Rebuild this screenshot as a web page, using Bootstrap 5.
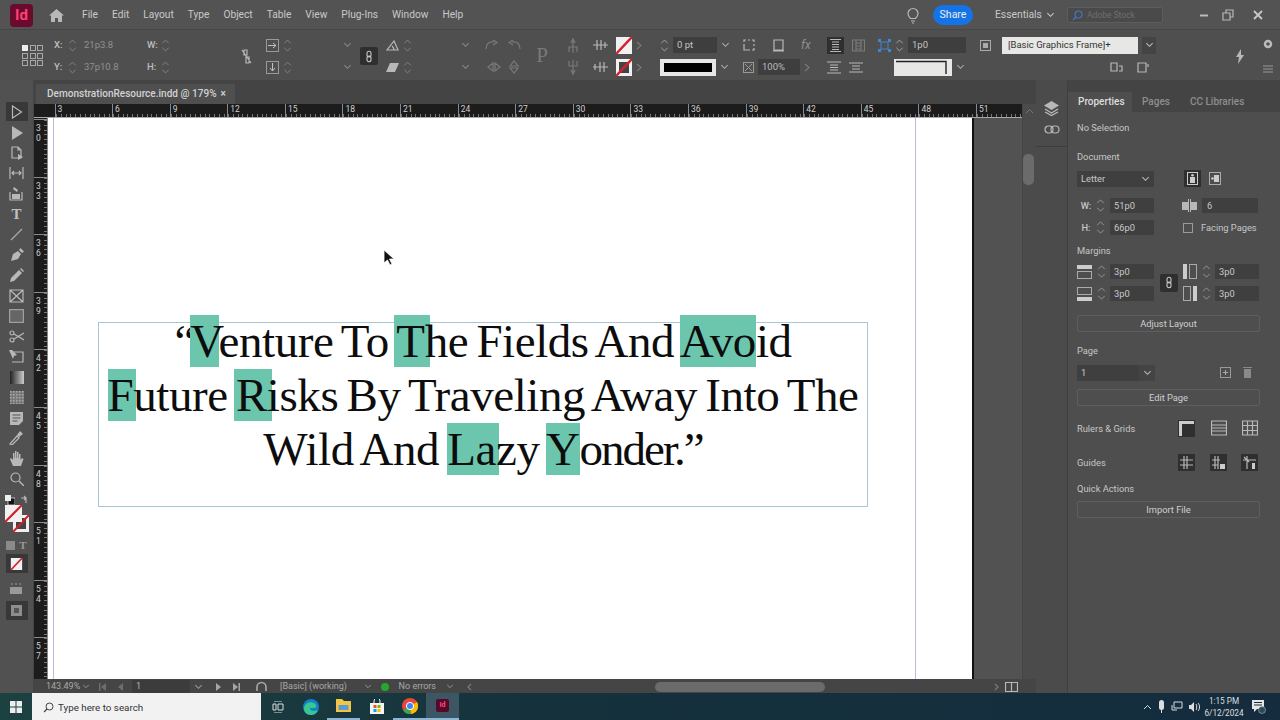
<!DOCTYPE html>
<html lang="en">
<head>
<meta charset="UTF-8">
<meta name="viewport" content="width=device-width, initial-scale=1.0">
<title>DemonstrationResource.indd - InDesign</title>
<link href="https://cdn.jsdelivr.net/npm/bootstrap@5.3.3/dist/css/bootstrap.min.css" rel="stylesheet">
<style>
html, body { margin: 0; background: #4f4f4f; }
body { font-family: Roboto, "Liberation Sans", sans-serif; font-size: 10px; color: #c8c8c8; line-height: 1.2; }
.app { width: 1280px; height: 720px; overflow: hidden; }
svg { display: block; flex: none; }
.ic { fill: none; stroke: #b8b8b8; stroke-width: 1.2; }
.ic-dim { fill: none; stroke: #7a7a7a; stroke-width: 1.2; }
.solid { fill: #b8b8b8; stroke: none; }
.serif-t { font-family: "Liberation Serif", serif; font-weight: 700; }

/* top menu */
.topbar { height: 30px; background: #535353; border-bottom: 1px solid #474747; padding: 1px 0 0 10px; }
.logo { width: 23px; height: 23px; border-radius: 4px; background: #6a0a2c; color: #ff4077; font-weight: 700; font-size: 15px; }
.home-ic { margin: 0 18px 0 16px; }
.menu { gap: 14px; font-size: 10.2px; color: #c9c9c9; }
.share { width: 40px; height: 20px; margin: 0 22px 0 14px; border-radius: 10px; background: #1473e6; color: #eee; font-size: 10.5px; }
.essentials { width: 50px; font-size: 10.3px; white-space: nowrap; }
.stock { width: 96px; height: 16px; margin-left: 22px; border: 1px solid #5d5d5d; border-radius: 2px; background: #4a4a4a; padding-left: 4px; color: #6f6f6f; font-size: 8.5px; }
.winbtns { margin: 0 17px 0 36px; gap: 13px; }
.win-x { margin-left: 6px; }

/* control panel */
.ctl { height: 50px; padding-top: 2px; background: #4f4f4f; display: grid; grid-auto-flow: column; grid-template-rows: 22px 22px; align-content: center;
  grid-template-columns: 22px 28px 93px 87px 32px 98px 26px 92px 50px 28px 56px 42px 80px 84px 50px 100px 30px 158px 1fr; }
.two { grid-row: 1 / 3; }
.cell { display: flex; align-items: center; gap: 4px; }
.lbl { color: #bdbdbd; font-weight: 500; font-size: 9.5px; width: 10px; }
.val { color: #8f8f8f; font-size: 9.5px; margin-left: 3px; }
.chain { width: 18px; height: 18px; background: #2f2f2f; border-radius: 2px; }
.chev-r { margin-left: auto; }
.big-p { font-family: "Liberation Serif", serif; font-size: 21px; color: #7a7a7a; }
.field { background: #3e3e3e; height: 16px; color: #c4c4c4; font-size: 9.5px; display: flex; align-items: center; padding-left: 4px; }
.f-stroke { width: 44px; }
.f-pct { width: 42px; color: #bbb; }
.f-sp { width: 58px; }
.light-field { background: #e7e7e5; color: #333; font-size: 9.5px; height: 17px; display: flex; align-items: center; padding-left: 6px; }
.lf-stroke { width: 56px; padding-left: 4px; }
.lf-style { width: 58px; margin-left: 26px; padding: 0; }
.lf-obj { width: 136px; }
.chev-box { background: #444; height: 17px; width: 14px; display: flex; align-items: center; justify-content: center; }
.ps-stroke { padding-left: 6px; }
.ps-align { padding-left: 9px; }
.ps-corner { padding-left: 9px; }
.ps-sp { padding-left: 10px; }
.ps-i { padding: 0 4px 0 12px; }
.fx { font-style: italic; font-size: 12px; color: #8e8e8e; }
.obj-ic { padding: 0 0 22px 12px; }
.obj-ics { padding-right: 6px; gap: 14px; }
.far-r { padding: 0 7px 0 80px; }
.bolt { margin-left: 0; }

/* workspace */
.workspace { height: 613px; }
.tools { width: 34px; background: #515151; padding-top: 22px; border-right: 1px solid #444; }
.tool { height: 20.4px; }
.tool-on { background: #383838; width: 22px; height: 19px; margin: 0 auto; flex: none; }
.tool-first { margin-bottom: 1.4px; }
.tool-t { font-size: 15px; color: #c0c0c0; }
.tool-fill { height: 31px; width: 24px; flex: none; margin-top: -4.4px; }
.tool-fmt { height: 18px; flex: none; }
.fmt-box { width: 9px; height: 9px; background: #8a8a8a; display: block; }
.fmt-t { font-size: 11px; color: #999; }
.tool-gap { height: 5px; flex: none; }
.tool-last { margin-top: 2px; }
.docarea { width: 1002px; }
.tabrow { height: 24px; background: #444; padding: 4px 0 0 2px; }
.doc-tab { width: 199px; height: 20px; background: #4f4f4f; padding-left: 11px; font-size: 10.05px; font-weight: 500; color: #d2d2d2; white-space: nowrap; }
.ruler-row { height: 14px; }
.ruler-top { width: 988px; background: #1c1c1c; padding-left: 20.5px; border-bottom: 1px solid #aaa; }
.rcell { width: 57.6px; flex: none; border-left: 1px solid #8a8a8a; padding-left: 2px; font-size: 8.5px; color: #cfcfcf; line-height: 10px;
  background: repeating-linear-gradient(90deg, #777 0 1px, transparent 1px 4.8px) left bottom / 100% 3px no-repeat; }
.ruler-end { width: 14px; background: #4b4b4b; border-left: 1px solid #454545; padding: 4px 0 0 2px; color: #777; }
.mid { height: 561px; }
.ruler-left { width: 14px; background: #1c1c1c; padding-top: 1px; border-right: 1px solid #888; }
.vcell { height: 57.6px; flex: none; border-top: 1px solid #8a8a8a; padding: 3px 0 0 2px; font-size: 8.5px; line-height: 10px; color: #cfcfcf;
  background: repeating-linear-gradient(180deg, #777 0 1px, transparent 1px 4.8px) right top / 3px 100% no-repeat; }
.canvas { width: 974px; background: #525252; position: relative; }
.page { width: 926px; background: #fff; border-right: 2px solid #111; padding: 204px 0 0 50px; }
.guide { position: absolute; top: 0; bottom: 0; width: 1px; background: #c9b6dd; }
.guide-l { left: 5px; }
.guide-r { left: 867px; }
.frame { width: 770px; height: 185px; border: 1px solid #a9c6d8; }
.quote { margin-top: -9px; text-align: center; font-family: "Liberation Serif", serif; font-size: 47px; line-height: 54px; color: #0d0d0d; white-space: nowrap; letter-spacing: -.44px; word-spacing: -3px; }
.open-q { letter-spacing: -5px; }
.tight { letter-spacing: -2px; }
.hl { background: #6cc6ae; }
.hl-wide { box-shadow: -2px 0 #6cc6ae, 5px 0 #6cc6ae; }
.hl-more { box-shadow: 3px 0 #6cc6ae; }
.cursor { position: absolute; left: 335px; top: 131px; }
.vscroll { width: 14px; background: #4b4b4b; border-left: 1px solid #454545; }
.vthumb { width: 11px; height: 31px; margin-top: 36px; background: #6b6b6b; border-radius: 5px; }

.status { height: 14px; background: #454545; font-size: 9px; color: #a8a8a8; padding: 1px 0 0 12px; display: grid; align-items: center; justify-items: center;
  grid-template-columns: 36px 8px 24px 12px 64px 16px 26px 10px 38px 77px 22px 11px 46px 28px 10px 351px 174px 25px; }
.s-text { justify-self: start; white-space: nowrap; }
.s-end { justify-self: end; }
.s-field { width: 58px; height: 13px; background: #3c3c3c; color: #b5b5b5; padding-left: 4px; display: flex; align-items: center; justify-self: end; }
.hthumb { width: 170px; height: 10px; margin-left: 181px; background: #6b6b6b; border-radius: 5px; justify-self: start; }
.dot { width: 8px; height: 8px; border-radius: 50%; background: #25a62c; }

/* right side */
.strip { width: 32px; background: #4b4b4b; border-right: 1px solid #3f3f3f; padding-top: 12px; }
.strip-ics { height: 55px; border-bottom: 1px solid #3d3d3d; gap: 9px; padding-top: 9px; }
.props { width: 212px; background: #4e4e4e; }
.p-head { height: 12px; background: #444; }
.p-tabs { height: 20px; background: #444; font-size: 10px; font-weight: 500; color: #8e8e8e; }
.p-tab { padding: 0 10px; height: 20px; display: flex; align-items: center; white-space: nowrap; }
.p-tab-on { background: #4e4e4e; color: #ddd; padding: 0 10px; height: 20px; display: flex; align-items: center; width: 64px; }
.p-body { padding: 10px 20px 0 9px; font-size: 9.3px; color: #c6c6c6; }
.p-row { display: flex; align-items: center; }
.p-field { background: #3f3f3f; height: 15px; display: flex; align-items: center; padding-left: 4px; color: #c8c8c8; font-size: 9.3px; }
.f-w { width: 44px; }
.f-pg { width: 56px; margin-left: 5px; padding-left: 5px; }
.p-lbl { width: 18px; text-align: center; font-weight: 500; }
.spin-slot { width: 15px; display: flex; }
.spin-mid { width: 18px; display: flex; justify-content: center; }
.p-btn { height: 17px; border: 1px solid #5e5e5e; border-radius: 2px; display: flex; align-items: center; justify-content: center; color: #cfcfcf; }
.chk { width: 10px; height: 10px; border: 1px solid #9a9a9a; margin-left: 29px; }
.dark-ic { width: 17px; height: 17px; background: #2f2f2f; display: flex; align-items: center; justify-content: center; }
.ic3 { width: 80px; margin-left: auto; margin-right: 2px; }
.doc-sel { width: 77px; height: 16px; padding-right: 4px; justify-content: space-between; }
.port { margin-left: 30px; }
.pg-ic { margin-left: 28px; }
.mar-link { width: 29px; display: flex; justify-content: center; align-items: center; }
.mar-col { width: 77px; gap: 7px; }
.pg-field { width: 62px; height: 16px; }
.pg-chev { width: 16px; height: 16px; }
.pg-add { margin-left: 65px; }
.pg-del { margin-left: auto; margin-right: 8px; }
.m-a { margin: 0 0 18px; }
.m-b { margin-bottom: 8px; }
.m-c { margin-bottom: 11px; }
.m-d { margin-bottom: 7px; }
.m-e { margin-bottom: 10px; }
.m-f { margin-bottom: 8px; }
.m-g1 { margin-bottom: 14px; }
.m-g2 { margin-bottom: 13px; }
.m-h { margin-bottom: 8px; }
.m-i { margin-bottom: 8px; }
.m-j { margin-bottom: 14px; }
.m-k { margin-bottom: 17px; }
.m-l { margin-bottom: 12px; }
.m-m { margin-bottom: 7px; }

/* windows taskbar */
.taskbar { height: 27px; background: linear-gradient(90deg, #1c4141, #15313c 45%, #142c3e); color: #e6e6e6; }
.start { width: 32px; }
.search { width: 229px; height: 27px; background: #f2f2f2; color: #333; font-size: 9.8px; gap: 4px; padding: 2px 0 0 11px; }
.tb-app { width: 33px; height: 27px; }
.tb-on { background: #3c5663; border-bottom: 2px solid #8bb7d4; }
.tb-run { border-bottom: 2px solid #8bb7d4; }
.id-mini { width: 13px; height: 13px; background: #56082a; color: #ff4b7e; font-size: 7px; font-weight: 700; border-radius: 2px; }
.tray { gap: 6px; }
.clock { font-size: 8.2px; text-align: center; line-height: 12px; color: #ddd; width: 40px; margin-left: -3px; }
.notif { margin: 0 14px 0 1px; }
</style>
</head>
<body>
<svg width="0" height="0" class="position-absolute">
  <defs>
    <symbol id="chev" viewBox="0 0 10 6"><path d="M1.500 1 5 4.500 8.500 1" fill="none" stroke="currentColor" stroke-width="1.200"/></symbol>
    <symbol id="spin" viewBox="0 0 10 16"><path d="M1.500 5.500 5 2l3.500 3.500M1.500 10.500 5 14l3.500-3.500" fill="none" stroke="currentColor" stroke-width="1"/></symbol>
    <symbol id="link" viewBox="0 0 10 16"><rect x="2.500" y="1.500" width="5" height="7" rx="2.500" fill="none" stroke="currentColor" stroke-width="1.300"/><rect x="2.500" y="7.500" width="5" height="7" rx="2.500" fill="none" stroke="currentColor" stroke-width="1.300"/></symbol>
    <symbol id="none" viewBox="0 0 16 17"><rect width="16" height="17" fill="#f1f1f1"/><path d="M0 17 16 0" stroke="#d3202c" stroke-width="2.400"/></symbol>
    <symbol id="gt" viewBox="0 0 6 9"><path d="m1 1 4 3.500L1 8" fill="none" stroke="#7a7a7a" stroke-width="1.200"/></symbol>
  </defs>
</svg>

<div class="app d-flex flex-column">
  <!-- menu bar -->
  <div class="topbar d-flex align-items-center">
    <div class="logo d-flex align-items-center justify-content-center">Id</div>
    <svg class="home-ic" width="15" height="13" viewBox="0 0 15 13"><path class="solid" d="M7.500 0 15 6.500h-2V13H9V9H6v4H2V6.500H0z"/></svg>
    <div class="menu d-flex">
      <span>File</span><span>Edit</span><span>Layout</span><span>Type</span><span>Object</span><span>Table</span><span>View</span><span>Plug-Ins</span><span>Window</span><span>Help</span>
    </div>
    <div class="d-flex align-items-center ms-auto">
      <svg width="12" height="17" viewBox="0 0 12 17"><path class="ic" d="M3.500 11.500C2 10 1 8.500 1 6.500a5 5 0 0 1 10 0c0 2-1 3.500-2.500 5zM4 14h4M5 16h2"/></svg>
      <div class="share d-flex align-items-center justify-content-center">Share</div>
      <span class="essentials d-flex align-items-center gap-1">Essentials <svg width="9" height="6" color="#c8c8c8"><use href="#chev"/></svg></span>
      <div class="stock d-flex align-items-center gap-1">
        <svg width="11" height="11" viewBox="0 0 11 11"><circle cx="6.500" cy="4.500" r="3.500" fill="none" stroke="#3f78c2" stroke-width="1.200"/><path d="M4 7 1 10" stroke="#3f78c2" stroke-width="1.200"/></svg>
        Adobe Stock
      </div>
      <div class="winbtns d-flex align-items-center">
        <svg width="10" height="3" viewBox="0 0 10 3"><path d="M1 1.500h8" stroke="#bbb" stroke-width="2"/></svg>
        <svg width="12" height="12" viewBox="0 0 12 12"><path class="ic" d="M1 4h7v7H1zM4 4V1h7v7H8"/></svg>
        <svg class="win-x" width="10" height="10" viewBox="0 0 10 10"><path d="m1 1 8 8M9 1 1 9" stroke="#c8c8c8" stroke-width="1.800"/></svg>
      </div>
    </div>
  </div>

  <!-- control panel -->
  <div class="ctl">
    <div class="two"></div>
    <div class="two d-flex align-items-center">
      <svg width="22" height="22" viewBox="0 0 22 22"><g fill="none" stroke="#a8a8a8"><rect x="8.500" y=".5" width="5" height="5"/><rect x="15.500" y=".5" width="5" height="5"/><rect x=".5" y="8.500" width="5" height="5"/><rect x="8.500" y="8.500" width="5" height="5"/><rect x="15.500" y="8.500" width="5" height="5"/><rect x=".5" y="15.500" width="5" height="5"/><rect x="8.500" y="15.500" width="5" height="5"/><rect x="15.500" y="15.500" width="5" height="5"/></g><rect width="6" height="6" fill="#eee"/></svg>
    </div>
    <div class="cell ps-1"><span class="lbl">X:</span><svg width="9" height="15" color="#888"><use href="#spin"/></svg><span class="val">21p3.8</span></div>
    <div class="cell ps-1"><span class="lbl">Y:</span><svg width="9" height="15" color="#888"><use href="#spin"/></svg><span class="val">37p10.8</span></div>
    <div class="cell ps-1"><span class="lbl">W:</span><svg width="9" height="15" color="#888"><use href="#spin"/></svg></div>
    <div class="cell ps-1"><span class="lbl">H:</span><svg width="9" height="15" color="#888"><use href="#spin"/></svg></div>
    <div class="two d-flex align-items-center justify-content-center">
      <svg width="11" height="15" viewBox="0 0 11 15"><path class="ic" d="M3 1h3v5H3zM5 8h3v6H5zM1 1l9 13"/></svg>
    </div>
    <div class="cell ps-1">
      <svg width="13" height="13" viewBox="0 0 13 13"><rect x=".5" y=".5" width="12" height="12" fill="none" stroke="#999"/><path d="M2 6.500h8M7 4l3 2.500L7 9" stroke="#c0c0c0" fill="none"/></svg>
      <svg width="9" height="15" color="#888"><use href="#spin"/></svg>
      <svg class="chev-r me-2" width="9" height="6" color="#888"><use href="#chev"/></svg>
    </div>
    <div class="cell ps-1">
      <svg width="13" height="13" viewBox="0 0 13 13"><rect x=".5" y=".5" width="12" height="12" fill="none" stroke="#999"/><path d="M6.500 2v8M4 7l2.500 3L9 7" stroke="#c0c0c0" fill="none"/></svg>
      <svg width="9" height="15" color="#888"><use href="#spin"/></svg>
      <svg class="chev-r me-2" width="9" height="6" color="#888"><use href="#chev"/></svg>
    </div>
    <div class="two d-flex align-items-center">
      <div class="chain d-flex align-items-center justify-content-center"><svg width="8" height="13" color="#cfcfcf"><use href="#link"/></svg></div>
    </div>
    <div class="cell">
      <svg width="13" height="11" viewBox="0 0 13 11"><path class="ic" d="M1 10h11L8 1zM8 10c0-2-1-3-2-4"/></svg>
      <svg width="9" height="15" color="#888"><use href="#spin"/></svg>
      <svg class="chev-r me-2" width="9" height="6" color="#888"><use href="#chev"/></svg>
    </div>
    <div class="cell">
      <svg width="13" height="11" viewBox="0 0 13 11"><path class="solid" d="M4 1h9l-4 9H0z"/></svg>
      <svg width="9" height="15" color="#888"><use href="#spin"/></svg>
      <svg class="chev-r me-2" width="9" height="6" color="#888"><use href="#chev"/></svg>
    </div>
    <!-- rotate, flip -->
    <div class="cell gap-2 justify-content-center">
      <svg width="14" height="10" viewBox="0 0 14 10"><path class="ic-dim" d="M1 9c0-5 3-8 8-7M8 0l4 2.500L8 5"/></svg>
      <svg width="14" height="10" viewBox="0 0 14 10"><path class="ic-dim" d="M13 9c0-5-3-8-8-7M6 0 2 2.500 6 5"/></svg>
    </div>
    <div class="cell gap-2 justify-content-center">
      <svg width="14" height="10" viewBox="0 0 14 10"><path class="ic-dim" d="M6 1 1 5l5 4zM8 1l5 4-5 4z"/></svg>
      <svg width="10" height="14" viewBox="0 0 10 14"><path class="ic-dim" d="M1 6 5 1l4 5zM1 8h8l-4 5z"/></svg>
    </div>
    <div class="two big-p d-flex align-items-center justify-content-center">P</div>
    <div class="cell justify-content-between ps-i">
      <svg width="10" height="15" viewBox="0 0 10 15"><path class="ic-dim" d="M5 0v15M1 14V9h8v5M3 5l2-4 2 4"/></svg>
      <svg width="15" height="12" viewBox="0 0 15 12"><path class="ic" d="M0 6h15M4 1v10M8 1v10M12 3v6"/></svg>
    </div>
    <div class="cell justify-content-between ps-i">
      <svg width="10" height="15" viewBox="0 0 10 15"><path class="ic-dim" d="M5 0v15M1 1v5h8V1M3 10l2 4 2-4"/></svg>
      <svg width="15" height="12" viewBox="0 0 15 12"><path class="ic" d="M0 6h15M2 3v6M7 1v10M11 1v10"/></svg>
    </div>
    <div class="cell ps-1"><svg width="16" height="17"><use href="#none"/></svg><svg width="6" height="9"><use href="#gt"/></svg></div>
    <div class="cell ps-1">
      <svg width="16" height="17" viewBox="0 0 16 17"><rect width="16" height="17" fill="#f1f1f1"/><rect x="3" y="3" width="10" height="11" fill="#444"/><path d="M0 17 16 0" stroke="#d3202c" stroke-width="2.400"/></svg>
      <svg width="6" height="9"><use href="#gt"/></svg>
    </div>
    <div class="cell ps-stroke"><svg width="9" height="15" color="#aaa"><use href="#spin"/></svg><span class="field f-stroke">0 pt</span><svg width="9" height="6" color="#aaa"><use href="#chev"/></svg></div>
    <div class="cell ps-stroke"><div class="light-field lf-stroke"><svg width="48" height="9"><rect width="48" height="9" fill="#000"/></svg></div><svg width="9" height="6" color="#aaa"><use href="#chev"/></svg></div>
    <div class="cell gap-3 ps-corner">
      <svg width="13" height="13" viewBox="0 0 13 13"><path class="ic" d="M1 3V1h2M5 1h2M9 1h2v2M11 5v2M11 9v2H9M1 5v6h6"/></svg>
      <svg width="13" height="13" viewBox="0 0 13 13"><path class="ic" d="M2 1h9v10H2zM1 12h11"/></svg>
      <span class="fx">fx</span>
    </div>
    <div class="cell gap-1 ps-corner">
      <svg width="11" height="11" viewBox="0 0 11 11"><rect x=".5" y=".5" width="10" height="10" fill="none" stroke="#999"/><path d="m2 2 7 7M9 2 2 9" stroke="#999"/></svg>
      <span class="field f-pct">100%</span>
      <svg width="6" height="9"><use href="#gt"/></svg>
    </div>
    <div class="cell gap-2 ps-align">
      <div class="dark-ic"><svg width="11" height="13" viewBox="0 0 11 13"><path class="ic" d="M0 .5h11M0 12.500h11M2 3h7M2 5.500h7M2 8h7M2 10.500h7"/></svg></div>
      <svg width="13" height="13" viewBox="0 0 13 13"><path class="ic-dim" d="M.5 1h12v11H.5zM4 1v11M9 1v11M4 4h5M4 7h5M4 10h5"/></svg>
    </div>
    <div class="cell gap-2 ps-align">
      <svg width="14" height="13" viewBox="0 0 14 13"><path class="ic" d="M0 1h14M0 12h14M3 4h8M3 6.500h8M3 9h8"/></svg>
      <svg width="14" height="13" viewBox="0 0 14 13"><path class="ic" d="M0 2h14M3 5h8M0 11h14M3 8h8"/></svg>
    </div>
    <div class="cell ps-sp">
      <svg width="13" height="13" viewBox="0 0 13 13"><path d="M3 3h7v7H3z" fill="none" stroke="#3f87cf"/><path fill="#3f87cf" d="M0 0h3v3H0zM10 0h3v3h-3zM0 10h3v3H0zM10 10h3v3h-3z"/></svg>
      <svg width="9" height="15" color="#aaa"><use href="#spin"/></svg>
      <span class="field f-sp">1p0</span>
    </div>
    <div class="cell">
      <div class="light-field lf-style"><svg width="56" height="14" viewBox="0 0 56 14"><path d="M2 1.500h50V14" fill="none" stroke="#222" stroke-width="1.400"/></svg></div>
      <svg width="9" height="6" color="#aaa"><use href="#chev"/></svg>
    </div>
    <div class="two d-flex align-items-center obj-ic">
      <svg width="11" height="11" viewBox="0 0 11 11"><rect x=".5" y=".5" width="10" height="10" fill="none" stroke="#aaa"/><rect x="3" y="3" width="5" height="5" fill="#aaa"/></svg>
    </div>
    <div class="cell gap-0 ps-1"><span class="light-field lf-obj">[Basic Graphics Frame]+</span><span class="chev-box ms-1"><svg width="9" height="6" color="#bbb"><use href="#chev"/></svg></span></div>
    <div class="cell justify-content-end obj-ics">
      <svg width="13" height="11" viewBox="0 0 13 11"><path class="ic" d="M1 1h6v8H1zM9 4h3v5H9"/></svg>
      <svg width="13" height="11" viewBox="0 0 13 11"><path class="ic" d="M1 1h8v9H1zM11 2v3"/></svg>
    </div>
    <div class="two d-flex align-items-center justify-content-between far-r">
      <svg class="bolt" width="8" height="15" viewBox="0 0 8 15"><path class="solid" d="M5 0 0 8h3l-1 7 6-9H5z"/></svg>
      <div class="d-flex flex-column gap-3">
        <svg width="10" height="10" viewBox="0 0 10 10"><circle cx="5" cy="5" r="3" fill="none" stroke="#bbb" stroke-width="2.500"/></svg>
        <svg width="10" height="8" viewBox="0 0 10 8"><path d="M0 1h10M0 4h10M0 7h10" stroke="#999"/></svg>
      </div>
    </div>
  </div>

  <div class="workspace d-flex">
    <!-- tool bar -->
    <div class="tools d-flex flex-column align-items-center">
      <div class="tool-on tool-first d-flex align-items-center justify-content-center"><svg width="12" height="14" viewBox="0 0 12 14"><path class="ic" d="M1.500 1v12l9-6z"/></svg></div>
      <div class="tool d-flex align-items-center"><svg width="12" height="14" viewBox="0 0 12 14"><path class="solid" d="M1 0v14l11-7z"/></svg></div>
      <div class="tool d-flex align-items-center"><svg width="13" height="14" viewBox="0 0 13 14"><path class="ic" d="M2 1h6l3 3v8H2zM8 1v3h3"/><path class="solid" d="m8 8 5 3-5 3z"/></svg></div>
      <div class="tool d-flex align-items-center"><svg width="15" height="12" viewBox="0 0 15 12"><path class="ic" d="M1 0v12M14 0v12M3 6h9M5 4 3 6l2 2M10 4l2 2-2 2"/></svg></div>
      <div class="tool d-flex align-items-center"><svg width="15" height="14" viewBox="0 0 15 14"><path class="ic" d="M1 5v8h12V5"/><path class="solid" d="M3 7h8v5H3zM5 0l4 3-1 2-4-3z"/></svg></div>
      <div class="tool tool-t serif-t d-flex align-items-center">T</div>
      <div class="tool d-flex align-items-center"><svg width="13" height="13" viewBox="0 0 13 13"><path d="M1 12 12 1" stroke="#aaa" stroke-width="1.200"/></svg></div>
      <div class="tool d-flex align-items-center"><svg width="14" height="14" viewBox="0 0 14 14"><path class="solid" d="M1 13 3 6l5-3 3 3-3 5zM9 2l1.500-2L14 3.500 12 5z"/></svg></div>
      <div class="tool d-flex align-items-center"><svg width="14" height="14" viewBox="0 0 14 14"><path class="solid" d="M0 14l1-4 8-8 3 3-8 8zM10 1l1-1 3 3-1 1z"/></svg></div>
      <div class="tool d-flex align-items-center"><svg width="15" height="14" viewBox="0 0 15 14"><path class="ic" d="M1 1h13v12H1zM1 1l13 12M14 1 1 13"/></svg></div>
      <div class="tool d-flex align-items-center"><svg width="15" height="14" viewBox="0 0 15 14"><rect x=".6" y=".6" width="13.800" height="12.800" fill="#666" stroke="#a0a0a0" stroke-width="1.200"/></svg></div>
      <div class="tool d-flex align-items-center"><svg width="15" height="13" viewBox="0 0 15 13"><circle cx="3" cy="3" r="2" class="ic"/><circle cx="3" cy="10" r="2" class="ic"/><path class="ic" d="M5 4 15 10M5 9 15 3"/></svg></div>
      <div class="tool d-flex align-items-center"><svg width="16" height="14" viewBox="0 0 16 14"><path class="ic" d="M3 2h11v10H3"/><path class="solid" d="M0 0h3l5 5-3 1-1 3z"/></svg></div>
      <div class="tool d-flex align-items-center"><svg width="14" height="13" viewBox="0 0 14 13"><defs><linearGradient id="gr"><stop offset="0" stop-color="#222"/><stop offset="1" stop-color="#ccc"/></linearGradient></defs><rect width="14" height="13" fill="url(#gr)"/></svg></div>
      <div class="tool d-flex align-items-center"><svg width="14" height="13" viewBox="0 0 14 13"><defs><pattern id="ck" width="3" height="3" patternUnits="userSpaceOnUse"><rect width="3" height="3" fill="#777"/><rect width="1.500" height="1.500" fill="#aaa"/></pattern></defs><rect width="14" height="13" fill="url(#ck)"/></svg></div>
      <div class="tool d-flex align-items-center"><svg width="13" height="13" viewBox="0 0 13 13"><path class="solid" d="M0 0h13v9l-4 4H0z"/><path d="M2.500 3h8M2.500 6h8M2.500 9h5" stroke="#555"/></svg></div>
      <div class="tool d-flex align-items-center"><svg width="15" height="14" viewBox="0 0 15 14"><path class="ic" d="M1 13 8 5l2 2-7 7z"/><path class="solid" d="M8 4l3-4 3 3-4 3z"/></svg></div>
      <div class="tool d-flex align-items-center"><svg width="14" height="15" viewBox="0 0 14 15"><path class="solid" d="M3 15 0 8l1-1 2 2V2h1.500v5H5V0h1.500v7H7V1h1.500v6H9V3h1.500v6l1.500-2 1.500 1L11 15z"/></svg></div>
      <div class="tool d-flex align-items-center"><svg width="14" height="14" viewBox="0 0 14 14"><circle cx="5.500" cy="5.500" r="4.500" class="ic"/><path d="m9 9 5 5" stroke="#b8b8b8" stroke-width="1.400"/></svg></div>
      <div class="tool d-flex align-items-center gap-1">
        <svg width="10" height="10" viewBox="0 0 10 10"><rect x="3" y="3" width="7" height="7" fill="#111" stroke="#ddd" stroke-width=".8"/><rect width="6" height="6" fill="#eee"/></svg>
        <svg width="9" height="9" viewBox="0 0 9 9"><path class="ic" d="M7 8V3H2M5 1l2 2-2 2"/></svg>
      </div>
      <div class="tool-fill">
        <svg width="24" height="27" viewBox="0 0 24 27"><rect x="8" y="10" width="16" height="17" fill="#f0f0f0"/><rect x="11" y="13" width="10" height="11" fill="#444"/><path d="M8 27 24 10" stroke="#d3202c" stroke-width="2"/><rect width="17" height="17" fill="#f1f1f1"/><path d="M0 17 17 0" stroke="#d3202c" stroke-width="2.200"/></svg>
      </div>
      <div class="tool-fmt d-flex align-items-center gap-1">
        <span class="fmt-box"></span>
        <span class="fmt-t serif-t">T</span>
      </div>
      <div class="tool-on d-flex align-items-center justify-content-center"><svg width="15" height="12"><use href="#none"/></svg></div>
      <div class="tool-gap"></div>
      <div class="tool d-flex align-items-center"><svg width="13" height="11" viewBox="0 0 13 11"><rect y="4" width="12" height="7" fill="#999"/><path d="M2 0v2M6 0v2M10 0v2" stroke="#999"/></svg></div>
      <div class="tool-on tool-last d-flex align-items-center justify-content-center"><svg width="11" height="11" viewBox="0 0 11 11"><rect width="11" height="11" fill="#8d8d8d"/><rect x="3" y="3" width="5" height="5" fill="#555"/></svg></div>
    </div>

    <!-- document area -->
    <div class="docarea d-flex flex-column">
      <div class="tabrow"><div class="doc-tab d-flex align-items-center gap-1">DemonstrationResource.indd @ 179%<span>×</span></div></div>
      <div class="ruler-row d-flex">
        <div class="ruler-top d-flex overflow-hidden">
          <div class="rcell">3</div><div class="rcell">6</div><div class="rcell">9</div><div class="rcell">12</div><div class="rcell">15</div><div class="rcell">18</div><div class="rcell">21</div><div class="rcell">24</div><div class="rcell">27</div><div class="rcell">30</div><div class="rcell">33</div><div class="rcell">36</div><div class="rcell">39</div><div class="rcell">42</div><div class="rcell">45</div><div class="rcell">48</div><div class="rcell">51</div>
        </div>
        <div class="ruler-end"><svg width="9" height="6"><path d="M1 5 4.500 1.500 8 5" fill="none" stroke="currentColor"/></svg></div>
      </div>
      <div class="mid d-flex">
        <div class="ruler-left d-flex flex-column overflow-hidden">
          <div class="vcell">3<br>0</div><div class="vcell">3<br>3</div><div class="vcell">3<br>6</div><div class="vcell">3<br>9</div><div class="vcell">4<br>2</div><div class="vcell">4<br>5</div><div class="vcell">4<br>8</div><div class="vcell">5<br>1</div><div class="vcell">5<br>4</div><div class="vcell">5<br>7</div>
        </div>
        <div class="canvas">
          <div class="page h-100">
            <div class="frame">
              <div class="quote"><span class="open-q">“</span><span class="hl">V</span>enture To <span class="hl hl-wide">T</span>he Fields And <span class="hl">Avo</span>id<br><span class="hl hl-more">F</span>uture <span class="hl hl-wide">R</span>isks By Traveling Away Into The<br>Wild And <span class="hl hl-more">La</span>zy <span class="hl">Y</span><span class="tight">onder.”</span></div>
            </div>
          </div>
          <div class="guide guide-l"></div>
          <div class="guide guide-r"></div>
          <svg class="cursor" width="13" height="17" viewBox="0 0 13 17"><path d="M1 1v13l3.500-3 2.500 5 2-1-2.500-5H11z" fill="#111" stroke="#fff" stroke-width=".8"/></svg>
        </div>
        <div class="vscroll"><div class="vthumb"></div></div>
      </div>
      <div class="status">
        <span class="s-text">143.49%</span>
        <svg width="8" height="5" color="#999"><use href="#chev"/></svg>
        <svg width="8" height="8" viewBox="0 0 8 8"><path fill="#6d6d6d" d="M1 0h1.500v8H1zM8 0v8L3 4z"/></svg>
        <svg width="6" height="8" viewBox="0 0 6 8"><path fill="#6d6d6d" d="M6 0v8L1 4z"/></svg>
        <span class="s-field">1</span>
        <svg width="9" height="6" color="#999"><use href="#chev"/></svg>
        <svg width="6" height="8" viewBox="0 0 6 8"><path fill="#a5a5a5" d="M0 0v8l5-4z"/></svg>
        <svg width="8" height="8" viewBox="0 0 8 8"><path fill="#a5a5a5" d="M0 0v8l5-4zM5.500 0H7v8H5.500z"/></svg>
        <svg width="11" height="11" viewBox="0 0 11 11"><path d="M1 10V6a4.500 4.500 0 0 1 9 0v4" fill="none" stroke="#aaa" stroke-width="1.600"/></svg>
        <span class="s-text">[Basic] (working)</span>
        <svg width="8" height="5" color="#999"><use href="#chev"/></svg>
        <span class="dot"></span>
        <span class="s-end">No errors</span>
        <svg width="8" height="5" color="#999"><use href="#chev"/></svg>
        <svg width="5" height="8" viewBox="0 0 5 8"><path class="ic-dim" d="M4 1 1 4l3 3"/></svg>
        <div class="hthumb"></div>
        <svg class="s-end" width="5" height="8" viewBox="0 0 5 8"><path class="ic-dim" d="m1 1 3 3-3 3"/></svg>
        <svg width="13" height="10" viewBox="0 0 13 10"><path class="ic" d="M.5.5h12v9H.5zM6.500.5v9"/></svg>
      </div>
    </div>

    <!-- panel strip -->
    <div class="strip">
      <div class="strip-ics d-flex flex-column align-items-center">
        <svg width="15" height="15" viewBox="0 0 15 15"><path class="solid" d="M7.500 0 15 4.500 7.500 9 0 4.500z"/><path d="m1 8 6.500 4L14 8M1 11l6.500 3.500L14 11" fill="none" stroke="#b8b8b8" stroke-width="1.400"/></svg>
        <svg width="16" height="9" viewBox="0 0 16 9"><rect x="1" y="1" width="8" height="7" rx="3.500" class="ic"/><rect x="7" y="1" width="8" height="7" rx="3.500" class="ic"/></svg>
      </div>
    </div>

    <!-- properties panel -->
    <div class="props d-flex flex-column">
      <div class="p-head"></div>
      <div class="p-tabs d-flex"><span class="p-tab-on">Properties</span><span class="p-tab">Pages</span><span class="p-tab">CC Libraries</span></div>
      <div class="p-body">
        <div class="m-a">No Selection</div>
        <div class="m-b">Document</div>
        <div class="p-row m-c">
          <div class="p-field doc-sel"><span>Letter</span><svg width="9" height="6" color="#bbb"><use href="#chev"/></svg></div>
          <div class="dark-ic port"><svg width="11" height="13" viewBox="0 0 11 13"><rect x=".5" y=".5" width="10" height="12" fill="none" stroke="#ccc"/><rect x="3" y="5" width="5" height="6" fill="#ccc"/><circle cx="5.500" cy="3.300" r="1.300" fill="#ccc"/></svg></div>
          <svg class="ms-2" width="12" height="13" viewBox="0 0 12 13"><rect x=".5" y=".5" width="11" height="12" fill="none" stroke="#aaa"/><rect x="5" y="3" width="5" height="7" fill="#ccc"/><circle cx="3.500" cy="6.500" r="1.300" fill="#ccc"/></svg>
        </div>
        <div class="p-row m-d">
          <span class="p-lbl">W:</span><span class="spin-slot"><svg width="11" height="15" color="#999"><use href="#spin"/></svg></span>
          <span class="p-field f-w">51p0</span>
          <svg class="pg-ic" width="15" height="13" viewBox="0 0 15 13"><path class="solid" d="M0 3h6V0h1v13H6v-2H0zM8 0h1v3h6v8H9v2H8z"/></svg>
          <span class="p-field f-pg">6</span>
        </div>
        <div class="p-row m-e">
          <span class="p-lbl">H:</span><span class="spin-slot"><svg width="11" height="15" color="#999"><use href="#spin"/></svg></span>
          <span class="p-field f-w">66p0</span>
          <span class="chk"></span><span class="ms-1 ps-1">Facing Pages</span>
        </div>
        <div class="m-f">Margins</div>
        <div class="d-flex align-items-center m-g1">
          <div class="mar-col d-flex flex-column">
            <div class="p-row">
              <svg width="15" height="14" viewBox="0 0 15 14"><rect width="15" height="4" fill="#ccc"/><rect x=".5" y="6.500" width="14" height="7" fill="none" stroke="#aaa"/></svg>
              <span class="spin-mid"><svg width="11" height="15" color="#999"><use href="#spin"/></svg></span>
              <span class="p-field f-w">3p0</span>
            </div>
            <div class="p-row">
              <svg width="15" height="14" viewBox="0 0 15 14"><rect y="10" width="15" height="4" fill="#ccc"/><rect x=".5" y=".5" width="14" height="7" fill="none" stroke="#aaa"/></svg>
              <span class="spin-mid"><svg width="11" height="15" color="#999"><use href="#spin"/></svg></span>
              <span class="p-field f-w">3p0</span>
            </div>
          </div>
          <div class="mar-link"><div class="chain d-flex align-items-center justify-content-center"><svg width="8" height="13" color="#cfcfcf"><use href="#link"/></svg></div></div>
          <div class="mar-col d-flex flex-column">
            <div class="p-row">
              <svg width="14" height="15" viewBox="0 0 14 15"><rect width="4" height="15" fill="#ccc"/><rect x="6.500" y=".5" width="7" height="14" fill="none" stroke="#aaa"/></svg>
              <span class="spin-mid"><svg width="11" height="15" color="#999"><use href="#spin"/></svg></span>
              <span class="p-field f-w">3p0</span>
            </div>
            <div class="p-row">
              <svg width="14" height="15" viewBox="0 0 14 15"><rect x="10" width="4" height="15" fill="#ccc"/><rect x=".5" y=".5" width="7" height="14" fill="none" stroke="#aaa"/></svg>
              <span class="spin-mid"><svg width="11" height="15" color="#999"><use href="#spin"/></svg></span>
              <span class="p-field f-w">3p0</span>
            </div>
          </div>
        </div>
        <div class="p-btn m-g2">Adjust Layout</div>
        <div class="m-h">Page</div>
        <div class="p-row m-i">
          <span class="p-field pg-field">1</span><span class="chev-box pg-chev"><svg width="9" height="6" color="#bbb"><use href="#chev"/></svg></span>
          <svg class="pg-add" width="11" height="11" viewBox="0 0 11 11"><rect x=".5" y=".5" width="10" height="10" fill="none" stroke="#999"/><path d="M5.500 3v5M3 5.500h5" stroke="#aaa"/></svg>
          <svg class="pg-del" width="9" height="11" viewBox="0 0 9 11"><path fill="#8a8a8a" d="M1 2h7v9H1zM0 0h9v1H0z"/></svg>
        </div>
        <div class="p-btn m-j">Edit Page</div>
        <div class="p-row m-k">
          <span>Rulers &amp; Grids</span>
          <div class="d-flex justify-content-between ic3">
            <div class="dark-ic"><svg width="15" height="15" viewBox="0 0 15 15"><path fill="#ccc" d="M0 0h15v3H3v12H0z"/></svg></div>
            <svg width="16" height="16" viewBox="0 0 16 16"><path class="ic" d="M.5 1h15v14H.5zM.5 5h15M.5 8h15M.5 11h15"/></svg>
            <svg width="16" height="16" viewBox="0 0 16 16"><path class="ic" d="M.5 1h15v14H.5zM.5 5.500h15M.5 10.500h15M5.500 1v14M10.500 1v14"/></svg>
          </div>
        </div>
        <div class="p-row m-l">
          <span>Guides</span>
          <div class="d-flex justify-content-between ic3">
            <div class="dark-ic"><svg width="13" height="13" viewBox="0 0 13 13"><path class="ic" d="M0 4h13M0 9h13M4 0v13M7 0v13"/></svg></div>
            <div class="dark-ic"><svg width="13" height="13" viewBox="0 0 13 13"><path class="ic" d="M0 4h8M0 9h6M3 0v13M6 0v13"/><rect x="8" y="8" width="5" height="5" fill="#ccc"/></svg></div>
            <div class="dark-ic"><svg width="13" height="13" viewBox="0 0 13 13"><path class="ic" d="M0 4h13M4 0v13M1 1l5 5"/><rect x="9" y="7" width="3" height="6" fill="#ccc"/></svg></div>
          </div>
        </div>
        <div class="m-m">Quick Actions</div>
        <div class="p-btn">Import File</div>
      </div>
    </div>
  </div>

  <!-- windows taskbar -->
  <div class="taskbar d-flex align-items-center">
    <div class="start d-flex align-items-center justify-content-center">
      <svg width="12" height="12" viewBox="0 0 12 12"><path fill="#eee" d="M0 0h5.500v5.500H0zM6.500 0H12v5.500H6.500zM0 6.500h5.500V12H0zM6.500 6.500H12V12H6.500z"/></svg>
    </div>
    <div class="search d-flex align-items-center">
      <svg width="11" height="11" viewBox="0 0 11 11"><circle cx="6.500" cy="4.500" r="3.500" fill="none" stroke="#444"/><path d="M4 7 1 10" stroke="#444" stroke-width="1.200"/></svg>
      <span>Type here to search</span>
    </div>
    <div class="tb-app d-flex align-items-center justify-content-center">
      <svg width="12" height="12" viewBox="0 0 12 12"><path d="M2 0h8M2 12h8" stroke="#ddd"/><path d="M1 3h3v6H1zM6 3h5v6H6z" fill="none" stroke="#ddd"/></svg>
    </div>
    <div class="tb-app d-flex align-items-center justify-content-center">
      <svg width="16" height="16" viewBox="0 0 16 16"><circle cx="8" cy="8" r="8" fill="#1580c8"/><path d="M1 10C1 4 7 2 11 4c3 1.500 3 5 0 5H7c0 3 4 4 8 2-1 3-4 5-7 5-4 0-7-3-7-6z" fill="#37c793"/></svg>
    </div>
    <div class="tb-app tb-run d-flex align-items-center justify-content-center">
      <svg width="15" height="13" viewBox="0 0 15 13"><path fill="#f4c542" d="M0 0h6l2 2h7v11H0z"/><rect x="2.500" y="6" width="10" height="5" fill="#5a9bd4"/></svg>
    </div>
    <div class="tb-app d-flex align-items-center justify-content-center">
      <svg width="14" height="15" viewBox="0 0 14 15"><path fill="#f4f4f4" d="M0 4h14v11H0z"/><path d="M4 4V2a3 3 0 0 1 6 0v2" fill="none" stroke="#f4f4f4"/><path fill="#f25022" d="M3.500 6h3v3h-3z"/><path fill="#7fba00" d="M7.500 6h3v3h-3z"/><path fill="#00a4ef" d="M3.500 10h3v3h-3z"/><path fill="#ffb900" d="M7.500 10h3v3h-3z"/></svg>
    </div>
    <div class="tb-app tb-run d-flex align-items-center justify-content-center">
      <svg width="16" height="16" viewBox="0 0 16 16"><circle cx="8" cy="8" r="8" fill="#e8453c"/><path d="M8 8 1 12a8 8 0 0 0 8 4z" fill="#34a853"/><path d="M8 8l7-4a8 8 0 0 1-6 12z" fill="#fbbc05"/><circle cx="8" cy="8" r="3.600" fill="#4285f4" stroke="#fff"/></svg>
    </div>
    <div class="tb-app tb-on d-flex align-items-center justify-content-center">
      <div class="id-mini d-flex align-items-center justify-content-center">Id</div>
    </div>
    <div class="tray d-flex align-items-center ms-auto">
      <svg width="9" height="6" viewBox="0 0 9 6"><path d="M1 5 4.500 1.500 8 5" fill="none" stroke="#ddd"/></svg>
      <svg width="7" height="13" viewBox="0 0 7 13"><rect x="1" width="5" height="10" rx="2.500" fill="#ddd"/><path d="M3.500 10v3" stroke="#ddd"/></svg>
      <svg width="12" height="11" viewBox="0 0 12 11"><path d="M3 1h8v6H3zM1 4v5h5" fill="none" stroke="#ddd"/></svg>
      <svg width="12" height="10" viewBox="0 0 12 10"><path fill="#ddd" d="M0 3h2l3-3v10L2 7H0z"/><path d="M7 2c1 1 1 5 0 6M9 1c2 2 2 6 0 8" fill="none" stroke="#ddd"/></svg>
      <div class="clock">1:15 PM<br>6/12/2024</div>
      <svg class="notif" width="15" height="15" viewBox="0 0 15 15"><path fill="#e6e6e6" d="M1 1h12v9H6l-3 3v-3H1z"/><path d="M3 3.500h8M3 6h8" stroke="#15313c"/><circle cx="11" cy="11" r="3.500" fill="#2b4a56" stroke="#ccc" stroke-width=".5"/></svg>
    </div>
  </div>
</div>
<script src="https://cdn.jsdelivr.net/npm/bootstrap@5.3.3/dist/js/bootstrap.bundle.min.js"></script>
</body>
</html>
